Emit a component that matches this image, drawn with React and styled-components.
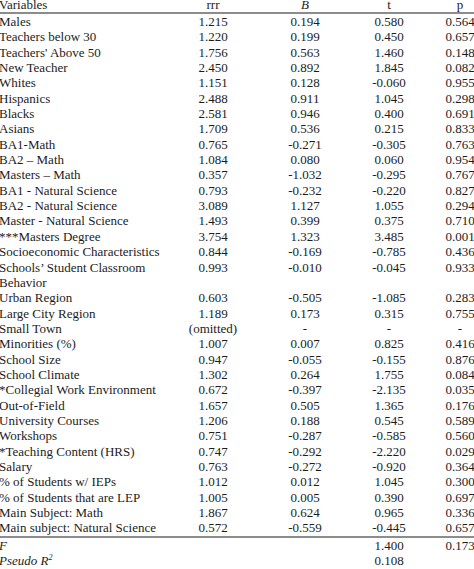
import React from "react";
import styled, { createGlobalStyle } from "styled-components";

const rows = [
  ["Males", "1.215", "0.194", "0.580", "0.564"],
  ["Teachers below 30", "1.220", "0.199", "0.450", "0.657"],
  ["Teachers' Above 50", "1.756", "0.563", "1.460", "0.148"],
  ["New Teacher", "2.450", "0.892", "1.845", "0.082"],
  ["Whites", "1.151", "0.128", "-0.060", "0.955"],
  ["Hispanics", "2.488", "0.911", "1.045", "0.298"],
  ["Blacks", "2.581", "0.946", "0.400", "0.691"],
  ["Asians", "1.709", "0.536", "0.215", "0.833"],
  ["BA1-Math", "0.765", "-0.271", "-0.305", "0.763"],
  ["BA2 \u2013 Math", "1.084", "0.080", "0.060", "0.954"],
  ["Masters \u2013 Math", "0.357", "-1.032", "-0.295", "0.767"],
  ["BA1 - Natural Science", "0.793", "-0.232", "-0.220", "0.827"],
  ["BA2 - Natural Science", "3.089", "1.127", "1.055", "0.294"],
  ["Master - Natural Science", "1.493", "0.399", "0.375", "0.710"],
  ["***Masters Degree", "3.754", "1.323", "3.485", "0.001"],
  ["Socioeconomic Characteristics", "0.844", "-0.169", "-0.785", "0.436"],
  ["Schools\u2019 Student Classroom Behavior", "0.993", "-0.010", "-0.045", "0.933"],
  ["Urban Region", "0.603", "-0.505", "-1.085", "0.283"],
  ["Large City Region", "1.189", "0.173", "0.315", "0.755"],
  ["Small Town", "(omitted)", "-", "-", "-"],
  ["Minorities (%)", "1.007", "0.007", "0.825", "0.416"],
  ["School Size", "0.947", "-0.055", "-0.155", "0.876"],
  ["School Climate", "1.302", "0.264", "1.755", "0.084"],
  ["*Collegial Work Environment", "0.672", "-0.397", "-2.135", "0.035"],
  ["Out-of-Field", "1.657", "0.505", "1.365", "0.176"],
  ["University Courses", "1.206", "0.188", "0.545", "0.589"],
  ["Workshops", "0.751", "-0.287", "-0.585", "0.560"],
  ["*Teaching Content (HRS)", "0.747", "-0.292", "-2.220", "0.029"],
  ["Salary", "0.763", "-0.272", "-0.920", "0.364"],
  ["% of Students w/ IEPs", "1.012", "0.012", "1.045", "0.300"],
  ["% of Students that are LEP", "1.005", "0.005", "0.390", "0.697"],
  ["Main Subject: Math", "1.867", "0.624", "0.965", "0.336"],
  ["Main subject: Natural Science", "0.572", "-0.559", "-0.445", "0.657"],
];

const GlobalStyle = createGlobalStyle`
  html, body {
    margin: 0;
    padding: 0;
    background: #ffffff;
    overflow: hidden;
  }
`;

const Page = styled.div`
  width: 474px;
  height: 569px;
  overflow: hidden;
  font-family: "Liberation Serif", "Times New Roman", serif;
  font-size: 13px;
  line-height: 15.35px;
  color: #1c1c1c;
`;

const Grid = styled.div`
  display: grid;
  grid-template-columns: 170px 86px 98px 70px 72px;
  width: 496px;
  margin-top: ${(p) => p.$offset || 0}px;
  border-bottom: ${(p) => (p.$rule ? "2px solid #8c8c8c" : "none")};
`;

const Label = styled.div`
  text-align: left;
  margin-left: -1px;
  font-style: ${(p) => (p.$italic ? "italic" : "normal")};
`;

const Cell = styled.div`
  text-align: center;
  font-style: ${(p) => (p.$italic ? "italic" : "normal")};
`;

const Sup = styled.sup`
  font-size: 8px;
  line-height: 0;
  vertical-align: 5px;
`;

export default function App() {
  return (
    <Page>
      <GlobalStyle />
      <Grid $offset={-3.35} $rule>
        <Label>Variables</Label>
        <Cell>rrr</Cell>
        <Cell $italic>B</Cell>
        <Cell>t</Cell>
        <Cell>p</Cell>
      </Grid>
      <Grid $rule>
        {rows.map((r) => (
          <React.Fragment key={r[0]}>
            <Label>{r[0]}</Label>
            <Cell>{r[1]}</Cell>
            <Cell>{r[2]}</Cell>
            <Cell>{r[3]}</Cell>
            <Cell>{r[4]}</Cell>
          </React.Fragment>
        ))}
      </Grid>
      <Grid>
        <Label $italic>F</Label>
        <Cell />
        <Cell />
        <Cell>1.400</Cell>
        <Cell>0.173</Cell>
        <Label $italic>
          Pseudo R<Sup>2</Sup>
        </Label>
        <Cell />
        <Cell />
        <Cell>0.108</Cell>
        <Cell />
      </Grid>
    </Page>
  );
}
